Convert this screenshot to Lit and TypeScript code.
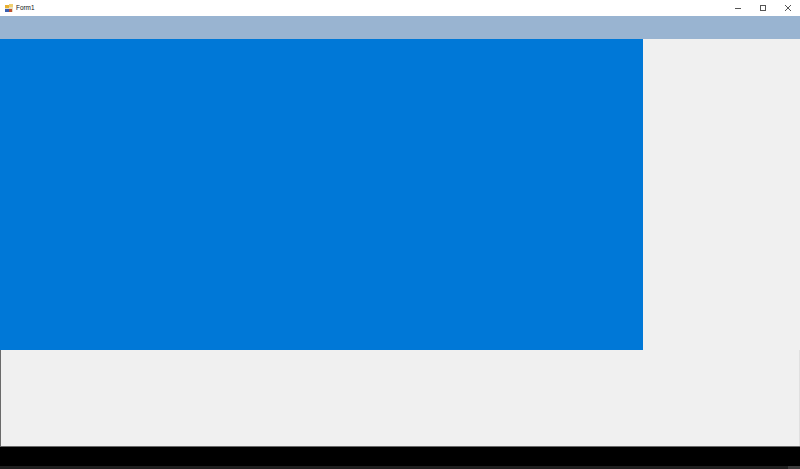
import { LitElement, html, css } from "lit";
import { customElement } from "lit/decorators.js";

@customElement("app-root")
export class AppRoot extends LitElement {
  static styles = css`
    :host { display: block; width: 800px; height: 469px; overflow: hidden; }
    .window { width: 800px; height: 469px; display: flex; flex-direction: column; background: #f0f0f0; }
    .title { height: 16px; flex: none; background: #fff; display: flex; align-items: center; padding-left: 5px; gap: 3px; }
    .title svg.icon { width: 8px; height: 8px; flex: none; }
    .name { font: 6.4px/16px "Liberation Sans", Arial, sans-serif; color: #111; flex: 1; }
    .controls { display: flex; align-items: center; }
    .ctl { width: 25px; height: 16px; display: flex; align-items: center; justify-content: center; }
    .ctl svg { width: 6px; height: 6px; stroke: #555; fill: none; stroke-width: 1; }
    .band { height: 23px; flex: none; background: #99b4d1; }
    .main { height: 311px; flex: none; }
    .panel { width: 643px; height: 311px; background: #0078d7; }
    .spacer { flex: 1; box-sizing: border-box; border-left: 1px solid #6a6a6a; border-right: 1px solid #e0e0e0; }
    .footer { height: 19px; flex: none; background: #000; border-top: 1px solid #6a6a6a; }
    .edge { height: 3px; flex: none; background: #1f1f1f; display: flex; justify-content: flex-end; }
    .grip { width: 12px; background: #3c3c3c; }
  `;

  render() {
    return html`
      <div class="window">
        <div class="title">
          <svg class="icon" viewBox="0 0 8 8">
            <rect x="0" y="1" width="8" height="7" fill="#e8e0c0"></rect>
            <rect x="0" y="1" width="4" height="3" fill="#e8b030"></rect>
            <rect x="4" y="0" width="4" height="3" fill="#f0d070"></rect>
            <rect x="0" y="5" width="4" height="3" fill="#3a5fb0"></rect>
            <rect x="4" y="5" width="3" height="3" fill="#c05030"></rect>
          </svg>
          <span class="name">Form1</span>
          <div class="controls">
            <div class="ctl"><svg viewBox="0 0 6 6"><path d="M0 3.5H6"></path></svg></div>
            <div class="ctl"><svg viewBox="0 0 6 6"><rect x=".5" y=".5" width="5" height="5"></rect></svg></div>
            <div class="ctl"><svg viewBox="0 0 6 6"><path d="M0 0L6 6M6 0L0 6"></path></svg></div>
          </div>
        </div>
        <div class="band"></div>
        <div class="main"><div class="panel"></div></div>
        <div class="spacer"></div>
        <div class="footer"></div>
        <div class="edge"><div class="grip"></div></div>
      </div>
    `;
  }
}
